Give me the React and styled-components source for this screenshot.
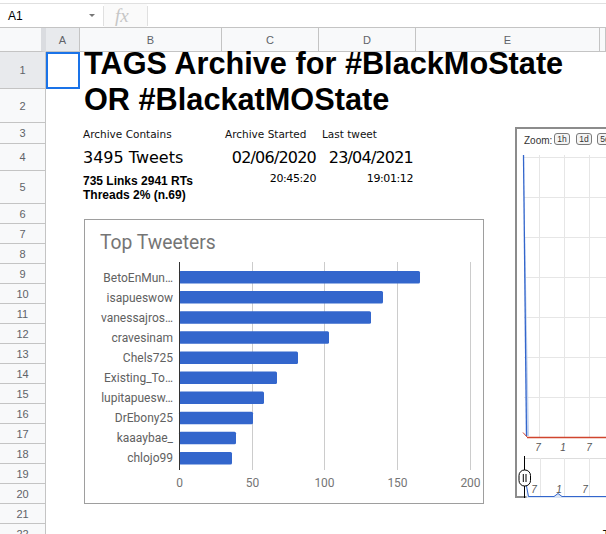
import React from 'react';
import styled, { createGlobalStyle } from 'styled-components';

const Global = createGlobalStyle`
  html, body { margin: 0; padding: 0; background: #fff; overflow: hidden; }
  body { width: 606px; height: 534px; font-family: Roboto, "Liberation Sans", Arial, sans-serif; }
  #root { width: 606px; height: 534px; overflow: hidden; }
`;

const FormulaBar = styled.div`
  margin-top: 3px;
  height: 25px;
  box-sizing: border-box;
  border-top: 1px solid #e0e0e0;
  border-bottom: 1px solid #c4c4c4;
  display: flex;
  align-items: center;
`;

const NameBox = styled.div`
  width: 103px;
  height: 100%;
  box-sizing: border-box;
  display: flex;
  align-items: center;
  justify-content: space-between;
  padding: 0 8px 0 8px;
  font: 12px "Liberation Sans", Arial, sans-serif;
  color: #000;
`;

const Caret = styled.span`
  width: 0;
  height: 0;
  border-left: 3px solid transparent;
  border-right: 3px solid transparent;
  border-top: 3px solid #777;
`;

const Divider = styled.span`
  width: 1px;
  height: 20px;
  background: #e0e0e0;
`;

const FxBox = styled.div`
  width: 43px;
  height: 100%;
  box-sizing: border-box;
  padding-left: 11px;
  display: flex;
  align-items: center;
  background: #fafafa;
  font: italic 19px "Liberation Serif", "Times New Roman", serif;
  color: #c6c6c6;
`;

const Sheet = styled.div`
  position: relative;
  display: grid;
  grid-template-columns: 46px 34px 142px 97px 97px 184px 1fr;
  grid-template-rows: 24px 37px 34px 21px 27px 33px repeat(17, 20px);
`;

const Corner = styled.div`
  background: #f8f9fa;
  border-right: 5px solid #dadce0;
  border-bottom: 1px solid #c4c4c4;
`;

const ColHead = styled.div`
  background: ${p => (p.$active ? '#e8eaed' : '#f8f9fa')};
  border-right: 1px solid #c4c4c4;
  border-bottom: 1px solid #c4c4c4;
  display: flex;
  align-items: center;
  justify-content: center;
  font: 11px "Liberation Sans", Arial, sans-serif;
  color: #5f6368;
  min-width: 0;
  overflow: hidden;
`;

const RowHead = styled(ColHead)``;

const Cell = styled.div`
  position: relative;
  display: flex;
  flex-direction: column;
  justify-content: ${p => p.$valign || 'center'};
  align-items: ${p => (p.$align === 'right' ? 'flex-end' : 'flex-start')};
  padding: 0 3px;
  white-space: nowrap;
  min-width: 0;
  overflow: visible;
  box-shadow: ${p => (p.$selected ? 'inset 0 0 0 2px #1a73e8' : 'none')};
`;

const Title = styled.div`
  font: bold 30.7px/${p => p.$lh}px "Liberation Sans", Arial, sans-serif;
  color: #000;
  margin-left: 1px;
`;

const Label = styled.div`
  font: 10.5px "DejaVu Sans", Verdana, sans-serif;
  color: #111;
`;

const BigStat = styled.div`
  font: 16px "DejaVu Sans", Verdana, sans-serif;
  letter-spacing: ${p => (p.$tight ? '-0.8px' : '0')};
  color: #000;
`;

const Detail = styled.div`
  font: bold 12px/14px "Liberation Sans", Arial, sans-serif;
  color: #000;
`;

const Time = styled.div`
  font: 11px/14px "DejaVu Sans", Verdana, sans-serif;
  letter-spacing: -0.4px;
  color: #000;
  padding-top: 1px;
`;

const TweetersChart = styled.div`
  position: absolute;
  left: 84px;
  top: 191px;
  width: 400px;
  height: 285px;
  box-sizing: border-box;
  border: 1px solid #9e9e9e;
  background: #fff;
  svg { display: block; }
`;

const TimelineChart = styled.div`
  position: absolute;
  left: 515px;
  top: 99px;
  width: 200px;
  height: 371px;
  box-sizing: border-box;
  border: 2px solid #8c8c8c;
  border-right: none;
  background: #fff;
  svg { display: block; }
`;

const cols = ['A', 'B', 'C', 'D', 'E', 'F'];

const content = {
  'A1': { selected: true },
  'B1': { node: <Title $lh={23}>TAGS Archive for #BlackMoState</Title>, valign: 'flex-start' },
  'B2': { node: <Title $lh={21}>OR #BlackatMOState</Title>, valign: 'flex-start' },
  'B3': { node: <Label>Archive Contains</Label> },
  'C3': { node: <Label>Archive Started</Label> },
  'D3': { node: <Label>Last tweet</Label> },
  'B4': { node: <BigStat>3495 Tweets</BigStat> },
  'C4': { node: <BigStat $tight>02/06/2020</BigStat>, align: 'right' },
  'D4': { node: <BigStat $tight>23/04/2021</BigStat>, align: 'right' },
  'B5': { node: <><Detail>735 Links 2941 RTs</Detail><Detail>Threads 2% (n.69)</Detail></> },
  'C5': { node: <Time>20:45:20</Time>, align: 'right', valign: 'flex-start' },
  'D5': { node: <Time>19:01:12</Time>, align: 'right', valign: 'flex-start' },
  'F22': { node: <Label>Tweets</Label> },
};

const tweeters = [
  ['BetoEnMun…', 241],
  ['isapueswow', 204],
  ['vanessajros…', 192],
  ['cravesinam', 150],
  ['Chels725', 119],
  ['Existing_To…', 98],
  ['lupitapuesw…', 85],
  ['DrEbony25', 74],
  ['kaaaybae_', 57],
  ['chlojo99', 53],
];

const ticks = [
  ['0', 94],
  ['50', 167],
  ['100', 239],
  ['150', 312],
  ['200', 385],
];

function TopTweeters() {
  return (
    <TweetersChart>
      <svg width="398" height="283" viewBox="0 0 398 283">
        <text x="15" y="29" fontFamily="Roboto, Arial, sans-serif" fontSize="19.3" fill="#757575">Top Tweeters</text>
        {ticks.slice(1).map(([, x]) => (
          <line key={x} x1={x + 0.5} x2={x + 0.5} y1="42" y2="250" stroke="#cccccc" strokeWidth="1" />
        ))}
        {tweeters.map(([name, w], i) => {
          const y = 51 + 20.1 * i;
          return (
            <g key={name}>
              <rect x="94" y={y} width={w} height="12.5" rx="1.5" fill="#3366cc" />
              <text x="88" y={y + 10.5} textAnchor="end" fontFamily="Roboto, Arial, sans-serif" fontSize="12" fill="#616161">{name}</text>
            </g>
          );
        })}
        <line x1="94.5" x2="94.5" y1="42" y2="250" stroke="#333" strokeWidth="1" />
        {ticks.map(([t, x]) => (
          <text key={t} x={x + 0.5} y="267" textAnchor="middle" fontFamily="Roboto, Arial, sans-serif" fontSize="12" fill="#757575">{t}</text>
        ))}
      </svg>
    </TweetersChart>
  );
}

function Timeline() {
  const vgrid = [22, 47, 72, 97, 122, 147, 172];
  const hgrid = [28, 68, 108, 148, 188, 228, 268];
  const btns = [['1h', 37.5], ['1d', 59.5], ['5d', 80.5]];
  const font = '"Liberation Sans", Arial, sans-serif';
  return (
    <TimelineChart>
      <svg width="198" height="369" viewBox="0 0 198 369">
        <text x="7" y="14.5" fontFamily={font} fontSize="10" fill="#333">Zoom:</text>
        {btns.map(([t, x]) => (
          <g key={t}>
            <rect x={x} y="4.5" width="15" height="11" rx="2.5" fill="#f4f4f4" stroke="#7a7a7a" strokeWidth="1" />
            <text x={x + 7.5} y="13" textAnchor="middle" fontFamily={font} fontSize="8.5" fill="#333">{t}</text>
          </g>
        ))}
        {vgrid.map(x => (
          <line key={'v' + x} x1={x + 0.5} x2={x + 0.5} y1="26" y2="308" stroke="#e6e6e6" />
        ))}
        {hgrid.map(y => (
          <line key={'h' + y} x1="7" x2="198" y1={y + 0.5} y2={y + 0.5} stroke="#e6e6e6" />
        ))}
        <polygon points="6.5,26 9.5,307 12,307" fill="#c3d3f0" />
        <polyline points="6.5,26 9.5,307" fill="none" stroke="#3366cc" strokeWidth="1.3" />
        <line x1="10" x2="198" y1="308.5" y2="308.5" stroke="#d0452e" strokeWidth="1.3" />
        <line x1="6" x2="10.5" y1="303.5" y2="308.5" stroke="#d0452e" strokeWidth="1" />
        {[[21, '7'], [46, '1'], [72, '7']].map(([x, t]) => (
          <text key={'x' + x} x={x} y="322" textAnchor="middle" fontFamily={font} fontSize="10" fontStyle="italic" fill="#555">{t}</text>
        ))}
        <line x1="7" x2="198" y1="329.5" y2="329.5" stroke="#dddddd" />
        {[23, 47, 72, 97].map(x => (
          <line key={'n' + x} x1={x + 0.5} x2={x + 0.5} y1="329" y2="367" stroke="#e6e6e6" />
        ))}
        <polygon points="9.5,357 11.5,367.5 37,367.5 41,364.5 45,367.5 198,367.5 198,369 9.5,369" fill="#dbe5f5" />
        <polyline points="9.5,357 11.5,367.5 37,367.5 41,364.5 45,367.5 198,367.5" fill="none" stroke="#3366cc" strokeWidth="1" />
        {[[17, '7'], [42, '1'], [68, '7']].map(([x, t]) => (
          <text key={'nx' + x} x={x} y="364" textAnchor="middle" fontFamily={font} fontSize="10" fontStyle="italic" fill="#555">{t}</text>
        ))}
        <line x1="7.5" x2="7.5" y1="327" y2="369" stroke="#000" strokeWidth="1" />
        <rect x="2" y="341" width="11.5" height="16" rx="5.5" fill="#fff" stroke="#000" strokeWidth="1" />
        <line x1="6.3" x2="6.3" y1="345" y2="353" stroke="#000" strokeWidth="1" />
        <line x1="9" x2="9" y1="345" y2="353" stroke="#000" strokeWidth="1" />
      </svg>
    </TimelineChart>
  );
}

export default function App() {
  const rows = Array.from({ length: 22 }, (_, i) => i + 1);
  return (
    <>
      <Global />
      <FormulaBar>
        <NameBox>
          <span>A1</span>
          <Caret />
        </NameBox>
        <Divider />
        <FxBox>fx</FxBox>
        <Divider />
      </FormulaBar>
      <Sheet>
        <Corner />
        {cols.map(c => (
          <ColHead key={c} $active={c === 'A'}>{c === 'F' ? '' : c}</ColHead>
        ))}
        {rows.map(r => (
          <React.Fragment key={r}>
            <RowHead $active={r === 1}>{r}</RowHead>
            {cols.map(c => {
              const item = content[c + r] || {};
              return (
                <Cell key={c + r} $align={item.align} $valign={item.valign} $selected={item.selected}>
                  {item.node}
                </Cell>
              );
            })}
          </React.Fragment>
        ))}
        <TopTweeters />
        <Timeline />
      </Sheet>
    </>
  );
}
